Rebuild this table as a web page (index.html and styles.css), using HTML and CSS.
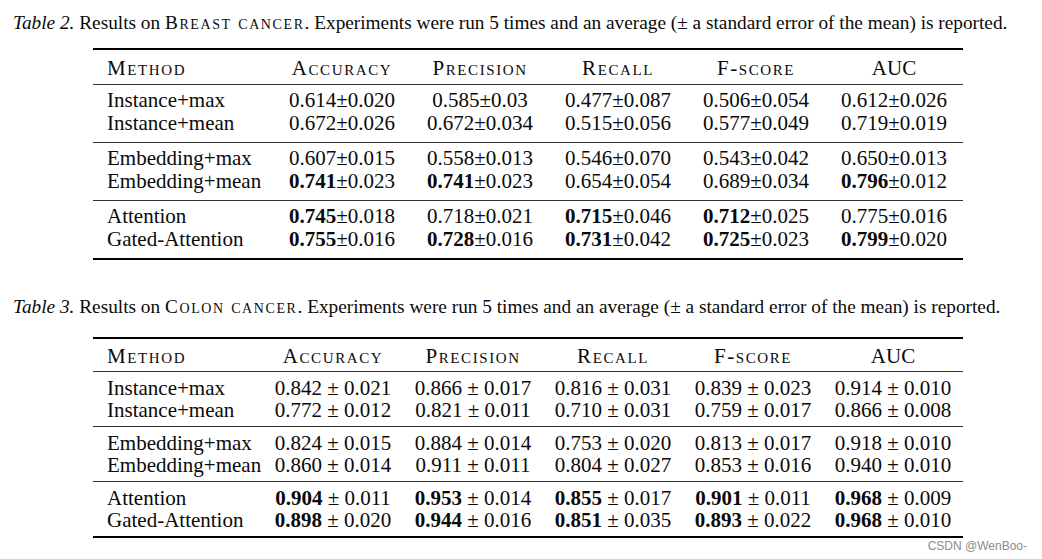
FILE: index.html
```html
<!DOCTYPE html>
<html lang="en">
<head>
<meta charset="utf-8">
<title>Results tables</title>
<link rel="stylesheet" href="styles.css">
</head>
<body>
<div class="page">
  <p class="caption caption-1"><i>Table 2.</i> Results on <span class="sc">Breast cancer</span>. Experiments were run 5 times and an average (± a standard error of the mean) is reported.</p>
  <table class="results results-1">
    <colgroup><col class="c-method"><col class="c-val"><col class="c-val"><col class="c-val"><col class="c-val"><col class="c-val"></colgroup>
    <thead>
      <tr><th class="m"><span class="sc">Method</span></th><th><span class="sc">Accuracy</span></th><th><span class="sc">Precision</span></th><th><span class="sc">Recall</span></th><th><span class="sc">F-score</span></th><th>AUC</th></tr>
    </thead>
    <tbody>
      <tr class="first"><td class="m">Instance+max</td><td>0.614±0.020</td><td>0.585±0.03</td><td>0.477±0.087</td><td>0.506±0.054</td><td>0.612±0.026</td></tr>
      <tr class="last"><td class="m">Instance+mean</td><td>0.672±0.026</td><td>0.672±0.034</td><td>0.515±0.056</td><td>0.577±0.049</td><td>0.719±0.019</td></tr>
    </tbody>
    <tbody>
      <tr class="first"><td class="m">Embedding+max</td><td>0.607±0.015</td><td>0.558±0.013</td><td>0.546±0.070</td><td>0.543±0.042</td><td>0.650±0.013</td></tr>
      <tr class="last"><td class="m">Embedding+mean</td><td><b>0.741</b>±0.023</td><td><b>0.741</b>±0.023</td><td>0.654±0.054</td><td>0.689±0.034</td><td><b>0.796</b>±0.012</td></tr>
    </tbody>
    <tbody>
      <tr class="first"><td class="m">Attention</td><td><b>0.745</b>±0.018</td><td>0.718±0.021</td><td><b>0.715</b>±0.046</td><td><b>0.712</b>±0.025</td><td>0.775±0.016</td></tr>
      <tr class="last"><td class="m">Gated-Attention</td><td><b>0.755</b>±0.016</td><td><b>0.728</b>±0.016</td><td><b>0.731</b>±0.042</td><td><b>0.725</b>±0.023</td><td><b>0.799</b>±0.020</td></tr>
    </tbody>
  </table>

  <p class="caption caption-2"><i>Table 3.</i> Results on <span class="sc">Colon cancer</span>. Experiments were run 5 times and an average (± a standard error of the mean) is reported.</p>
  <table class="results results-2">
    <colgroup><col class="c-method"><col class="c-val"><col class="c-val"><col class="c-val"><col class="c-val"><col class="c-val"></colgroup>
    <thead>
      <tr><th class="m"><span class="sc">Method</span></th><th><span class="sc">Accuracy</span></th><th><span class="sc">Precision</span></th><th><span class="sc">Recall</span></th><th><span class="sc">F-score</span></th><th>AUC</th></tr>
    </thead>
    <tbody>
      <tr class="first"><td class="m">Instance+max</td><td>0.842 ± 0.021</td><td>0.866 ± 0.017</td><td>0.816 ± 0.031</td><td>0.839 ± 0.023</td><td>0.914 ± 0.010</td></tr>
      <tr class="last"><td class="m">Instance+mean</td><td>0.772 ± 0.012</td><td>0.821 ± 0.011</td><td>0.710 ± 0.031</td><td>0.759 ± 0.017</td><td>0.866 ± 0.008</td></tr>
    </tbody>
    <tbody>
      <tr class="first"><td class="m">Embedding+max</td><td>0.824 ± 0.015</td><td>0.884 ± 0.014</td><td>0.753 ± 0.020</td><td>0.813 ± 0.017</td><td>0.918 ± 0.010</td></tr>
      <tr class="last"><td class="m">Embedding+mean</td><td>0.860 ± 0.014</td><td>0.911 ± 0.011</td><td>0.804 ± 0.027</td><td>0.853 ± 0.016</td><td>0.940 ± 0.010</td></tr>
    </tbody>
    <tbody>
      <tr class="first"><td class="m">Attention</td><td><b>0.904</b> ± 0.011</td><td><b>0.953</b> ± 0.014</td><td><b>0.855</b> ± 0.017</td><td><b>0.901</b> ± 0.011</td><td><b>0.968</b> ± 0.009</td></tr>
      <tr class="last"><td class="m">Gated-Attention</td><td><b>0.898</b> ± 0.020</td><td><b>0.944</b> ± 0.016</td><td><b>0.851</b> ± 0.035</td><td><b>0.893</b> ± 0.022</td><td><b>0.968</b> ± 0.010</td></tr>
    </tbody>
  </table>
  <div class="watermark">CSDN @WenBoo-</div>
</div>
</body>
</html>
```

FILE: styles.css
```css
html, body {
  margin: 0;
  padding: 0;
  background: #ffffff;
}

.page {
  width: 1042px;
  height: 559px;
  overflow: hidden;
  font-family: "Liberation Serif", "Times New Roman", serif;
  color: #0a0a0a;
}

.caption {
  margin: 0;
  padding-left: 13px;
  font-size: 19.3px;
  line-height: 24px;
  white-space: nowrap;
}

.caption-1 {
  padding-top: 11px;
}

.caption-2 {
  padding-top: 35px;
}

.sc {
  font-variant: small-caps;
  letter-spacing: 1.6px;
}

.results {
  margin-left: 93px;
  width: 870px;
  border-collapse: collapse;
  table-layout: fixed;
  font-size: 21px;
  border-top: 2px solid #000;
  border-bottom: 2px solid #000;
}

.results-1 {
  margin-top: 13px;
}

.results-2 {
  margin-top: 18px;
}

.results-1 .c-method { width: 180px; }
.results-1 .c-val { width: 138px; }
.results-2 .c-method { width: 170px; }
.results-2 .c-val { width: 140px; }

.results th,
.results td {
  padding: 0;
  text-align: center;
  white-space: nowrap;
  font-weight: normal;
}

.results .m {
  text-align: left;
  padding-left: 14px;
}

.results thead tr {
  border-bottom: 1px solid #333;
}

.results tbody + tbody {
  border-top: 1px solid #333;
}

.results b {
  font-weight: bold;
}

/* Table 1 spacing */
.results-1 th {
  line-height: 23px;
  padding-top: 7px;
  padding-bottom: 4px;
}

.results-1 td {
  line-height: 23px;
}

.results-1 tr.first td { padding-top: 4px; }
.results-1 tr.last td { padding-bottom: 7px; }

/* Table 2 spacing */
.results-2 th {
  line-height: 22px;
  padding-top: 6px;
  padding-bottom: 4px;
}

.results-2 td {
  line-height: 22px;
}

.results-2 tr.first td { padding-top: 5px; }
.results-2 tr.last td { padding-bottom: 5px; }

.watermark {
  display: flex;
  justify-content: flex-end;
  padding-right: 15px;
  margin-top: 1px;
  font-family: "Liberation Sans", Arial, sans-serif;
  font-size: 12px;
  line-height: 14px;
  color: #8c8c8c;
}
```
